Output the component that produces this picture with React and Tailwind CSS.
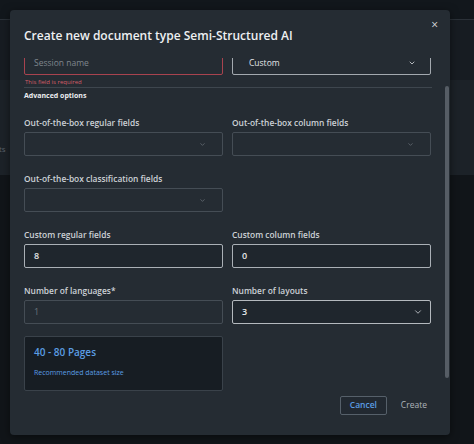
import { ChevronDown } from 'lucide-react';

// Modal "Create new document type" — content area is shown scrolled a little
const Label = ({ children }) => (
  <div className="mb-[4px] h-[10px] text-[8.4px] leading-[10px] font-semibold text-[#cdd2d7]">{children}</div>
);

function EmptySelect() {
  return (
    <div className="flex h-[24px] items-center justify-end rounded-[2px] border border-[#454d55] pr-[16px]">
      <ChevronDown className="h-[7px] w-[7px] text-[#7a828a]" strokeWidth={2} />
    </div>
  );
}

function ValueInput({ value, disabled = false }) {
  return (
    <div
      className={
        disabled
          ? 'flex h-[24px] items-center rounded-[2px] border border-[#454d55] px-[9px] text-[9px] text-[#6b737b]'
          : 'flex h-[24px] items-center rounded-[2px] border border-[#aab0b6] bg-[#1f262d] px-[9px] text-[9px] font-semibold text-[#e6e8ea]'
      }
    >
      {value}
    </div>
  );
}

export default function App() {
  return (
    <div className="relative h-[444px] w-[474px] overflow-hidden bg-[#111519] font-['Open_Sans',sans-serif]">
      {/* page behind the overlay */}
      <div className="flex flex-col">
        <div className="h-[19px] bg-[#12171c]" />
        <div className="h-px bg-[#2b3138]" />
        <div className="h-[60px] bg-[#171c22]" />
        <div className="h-[95px] bg-[#1c2228] pt-[63px] text-[8px] text-[#59616a]">
          <span className="ml-[-6px]">nts</span>
        </div>
      </div>

      <div className="absolute left-[10px] top-[10px] flex h-[425px] w-[440px] flex-col rounded-[4px] bg-[#252c33] shadow-[0_2px_8px_rgba(0,0,0,0.5)]">
        <button className="absolute right-[12px] top-[9px] text-[12px] leading-[12px] text-[#d6dadd]">×</button>
        <div className="h-[48px] pl-[14px] pt-[17px] text-[12px] leading-[18px] font-semibold text-[#eef0f2]">
          Create new document type Semi-Structured AI
        </div>

        <div className="flex h-[334px] overflow-hidden">
          <div className="w-[421px] pl-[14px]">
            <div className="mt-[-7px] grid grid-cols-2 gap-x-[9px]">
              <div className="flex h-[24px] items-center rounded-[2px] border border-[#a8434f] px-[9px] text-[8.5px] text-[#7f868d]">
                Session name
              </div>
              <div className="flex h-[24px] items-center justify-between rounded-[2px] border border-[#a3a9af] pl-[16px] pr-[14px] text-[8.5px] font-medium text-[#e3e6e8]">
                Custom
                <ChevronDown className="h-[8px] w-[8px] text-[#d0d4d8]" strokeWidth={2.5} />
              </div>
            </div>
            <div className="mt-[2px] ml-[1px] h-[10px] text-[6px] leading-[10px] text-[#d45c68]">This field is required</div>
            <div className="h-px w-[408px] bg-[#3e464e]" />
            <div className="mt-[3px] h-[10px] text-[7px] leading-[10px] font-bold text-[#eceef0]">Advanced options</div>

            <div className="mt-[17px] flex flex-col gap-[18px]">
              <div className="grid grid-cols-2 gap-x-[9px]">
                <div>
                  <Label>Out-of-the-box regular fields</Label>
                  <EmptySelect />
                </div>
                <div>
                  <Label>Out-of-the-box column fields</Label>
                  <EmptySelect />
                </div>
              </div>
              <div className="grid grid-cols-2 gap-x-[9px]">
                <div>
                  <Label>Out-of-the-box classification fields</Label>
                  <EmptySelect />
                </div>
              </div>
              <div className="grid grid-cols-2 gap-x-[9px]">
                <div>
                  <Label>Custom regular fields</Label>
                  <ValueInput value="8" />
                </div>
                <div>
                  <Label>Custom column fields</Label>
                  <ValueInput value="0" />
                </div>
              </div>
              <div className="grid grid-cols-2 gap-x-[9px]">
                <div>
                  <Label>Number of languages*</Label>
                  <ValueInput value="1" disabled />
                </div>
                <div>
                  <Label>Number of layouts</Label>
                  <div className="flex h-[24px] items-center justify-between rounded-[2px] border border-[#b4b9be] bg-[#1f262d] pl-[9px] pr-[7px] text-[9px] font-semibold text-[#e6e8ea]">
                    3
                    <ChevronDown className="h-[10px] w-[10px] text-[#c9cdd1]" strokeWidth={2} />
                  </div>
                </div>
              </div>
            </div>

            <div className="mt-[12px] grid grid-cols-2 gap-x-[9px]">
              <div className="h-[55px] rounded-[2px] border border-[#3a424a] bg-[#171d23] pl-[9px] pt-[8px]">
                <div className="h-[14px] text-[10px] leading-[14px] font-semibold text-[#5b9de4]">40 - 80 Pages</div>
                <div className="mt-[9px] text-[7px] leading-[10px] text-[#5b9de4]">Recommended dataset size</div>
              </div>
            </div>
          </div>
          <div className="ml-[14px] w-[4px]">
            <div className="mt-[28px] h-[292px] rounded-full bg-[#565d65]" />
          </div>
        </div>

        <div className="flex items-center justify-end gap-[14px] pr-[23px] pt-[4px]">
          <button className="h-[19px] w-[47px] rounded-[2px] border border-[#56606a] bg-[#222931] text-[8.5px] font-semibold text-[#5b9de4]">
            Cancel
          </button>
          <button className="text-[8.5px] text-[#aeb4ba]">Create</button>
        </div>
      </div>
    </div>
  );
}
